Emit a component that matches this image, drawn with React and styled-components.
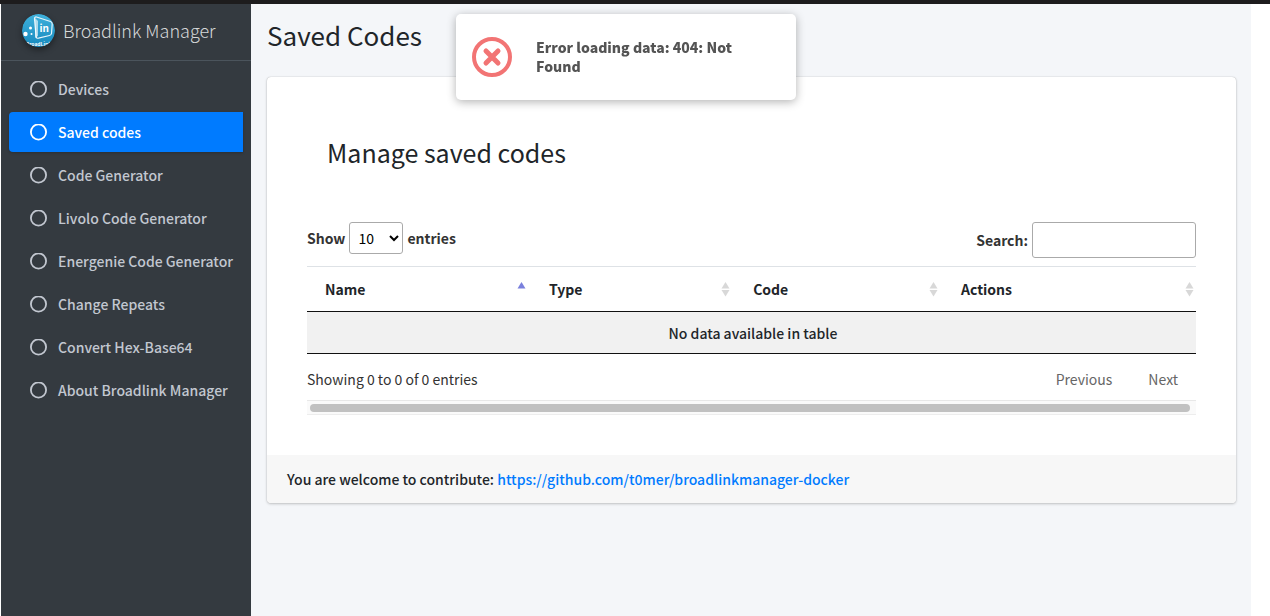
import React, { useState } from "react";
import styled, { createGlobalStyle, css } from "styled-components";

const GlobalStyle = createGlobalStyle`
  *,
  *::before,
  *::after {
    box-sizing: border-box;
  }

  body {
    margin: 0;
    background: #fff;
    color: #212529;
    font-family: "Noto Sans CJK SC", "Noto Sans", sans-serif;
    font-size: 14px;
    font-weight: 500;
    line-height: 24px;
  }

  button,
  input,
  select {
    font: inherit;
  }
`;

const Page = styled.div`
  display: flex;
  flex-direction: column;
  min-height: 100vh;
`;

const TopStrip = styled.div`
  height: 4px;
  background: #1d1c1d;
`;

const Wrapper = styled.div`
  flex: 1;
  display: flex;
  padding: 0 19px 0 1px;
`;

const Sidebar = styled.aside`
  flex: 0 0 250px;
  background: #343a40;
`;

const Brand = styled.a`
  display: flex;
  align-items: center;
  gap: 8px;
  height: 57px;
  padding: 0 0 4px 21px;
  border-bottom: 1px solid #4b545c;
  color: #d6d8d9;
  font-size: 18px;
  font-weight: 300;
  text-decoration: none;

  svg {
    flex: none;
    border-radius: 50%;
    box-shadow: 0 3px 6px rgba(0, 0, 0, 0.4);
  }
`;

const Nav = styled.nav`
  display: flex;
  flex-direction: column;
  gap: 3px;
  padding: 8px;
`;

const NavItem = styled.a`
  display: flex;
  align-items: center;
  gap: 11px;
  height: 40px;
  padding-left: 21px;
  border-radius: 4px 0 0 4px;
  color: #c2c7d0;
  text-decoration: none;
  white-space: nowrap;

  ${(props) =>
    props.$active &&
    css`
      background: #007bff;
      color: #fff;
      box-shadow: 0 1px 3px rgba(0, 0, 0, 0.2);
    `}
`;

const Content = styled.main`
  flex: 1;
  min-width: 0;
  padding: 11px 15px 24px 16px;
  background: #f4f6f9;
`;

const PageTitle = styled.h1`
  margin: 0 0 22px;
  font-size: 26px;
  font-weight: 400;
  line-height: 40px;
`;

const Card = styled.section`
  border-radius: 4px;
  background: #fff;
  box-shadow: 0 0 1px rgba(0, 0, 0, 0.3), 0 1px 3px rgba(0, 0, 0, 0.2);
  overflow: hidden;
`;

const CardBody = styled.div`
  padding: 55px 40px 40px;
`;

const CardTitle = styled.h2`
  margin: 0 20px 50px;
  font-size: 25px;
  font-weight: 400;
  line-height: 40px;
`;

const CardFooter = styled.footer`
  padding: 12px 20px;
  background: #f7f7f7;

  a {
    color: #007bff;
    text-decoration: none;
  }
`;

const Toolbar = styled.div`
  display: flex;
  justify-content: space-between;
  align-items: flex-start;
  padding-bottom: 8px;
`;

const Field = styled.label`
  display: flex;
  align-items: center;
  gap: 4px;
  color: #333;
  font-weight: 700;
`;

const PageSize = styled.select`
  width: 54px;
  height: 32px;
  padding: 0 0 0 4px;
  border: 1px solid #aaa;
  border-radius: 3px;
  background: #fff;
  color: #000;
  font-weight: 400;
`;

const SearchInput = styled.input`
  width: 164px;
  height: 36px;
  padding: 4px;
  border: 1px solid #aaa;
  border-radius: 3px;
  background: #fff;
`;

const TableFrame = styled.div`
  border-top: 1px solid #dee2e6;
  overflow: hidden;
`;

const Table = styled.table`
  width: calc(100% + 3px);
  border-collapse: separate;
  border-spacing: 0;
  border-bottom: 1px solid #111;
  table-layout: fixed;
`;

const HeadCell = styled.th`
  width: ${(props) => props.$width};
  height: 45px;
  padding: 0 5px 0 18px;
  border-bottom: 1px solid #111;
  text-align: left;
`;

const HeadLabel = styled.div`
  display: flex;
  justify-content: space-between;
  align-items: center;
`;

const EmptyCell = styled.td`
  height: 41px;
  padding: 0;
  background: #f1f1f1;
  text-align: center;
`;

const TableFooter = styled.div`
  display: flex;
  justify-content: space-between;
  align-items: center;
  height: 46px;
  padding-top: 4px;
  color: #333;
  font-weight: 400;
`;

const Pager = styled.div`
  display: flex;
`;

const PagerButton = styled.button`
  padding: 0 18px;
  border: none;
  background: none;
  color: #666;
`;

const ScrollTrack = styled.div`
  height: 15px;
  padding: 3px 6px 2px 3px;
  border-top: 1px solid #e8e8e8;
  border-bottom: 1px solid #ededed;
  background: #fafafa;

  &::before {
    content: "";
    display: block;
    height: 8px;
    border-radius: 4px;
    background: #c1c1c1;
  }
`;

const Toast = styled.div`
  position: fixed;
  top: 14px;
  left: calc(50% - 9px);
  transform: translateX(-50%);
  display: flex;
  align-items: center;
  gap: 24px;
  width: 340px;
  min-height: 86px;
  padding: 10px 40px 10px 16px;
  border-radius: 5px;
  background: #fff;
  box-shadow: 0 2px 10px rgba(0, 0, 0, 0.3);
  color: #545454;
  font-weight: 900;
  line-height: 19px;

  svg {
    flex: none;
  }
`;

const LINKS = [
  "Devices",
  "Saved codes",
  "Code Generator",
  "Livolo Code Generator",
  "Energenie Code Generator",
  "Change Repeats",
  "Convert Hex-Base64",
  "About Broadlink Manager",
];

const COLUMNS = [
  { name: "Name", width: "25.1%" },
  { name: "Type", width: "22.9%" },
  { name: "Code", width: "23.3%" },
  { name: "Actions", width: "28.7%" },
];

const Logo = () => (
  <svg width="33" height="33" viewBox="0 0 33 33" aria-hidden="true">
    <defs>
      <linearGradient id="logo" x1="0" y1="0" x2="0" y2="1">
        <stop offset="0" stopColor="#3fb1dc" />
        <stop offset="1" stopColor="#1689bd" />
      </linearGradient>
    </defs>
    <circle cx="16.5" cy="16.5" r="16.5" fill="url(#logo)" />
    <path
      d="M14.500 3 28.500 7.500q1.800.6 1.700 2.500l-.7 9.500q-.3 1.600-2 2l-11 2.700q-2.200.3-2.400-1.800L12.500 5q-.1-2.300 2-2Z"
      fill="none"
      stroke="#e6f5fb"
      strokeWidth="1.200"
    />
    <path d="M13 4v20l3-2V7Z" fill="#fff" fillOpacity="0.6" />
    <circle cx="3.500" cy="20" r="2.200" fill="#fff" />
    <circle cx="8.500" cy="14" r="1.500" fill="#fff" />
    <circle cx="9.500" cy="20" r="1" fill="#fff" />
    <text x="17.500" y="18" fill="#fff" fontSize="10" fontWeight="700">
      in
    </text>
    <text x="16.500" y="31.500" fill="#fff" fontSize="5" fontWeight="700" textAnchor="middle">
      BroadLink
    </text>
  </svg>
);

const CircleIcon = () => (
  <svg width="17" height="17" viewBox="0 0 17 17" aria-hidden="true">
    <circle cx="8.500" cy="8" r="7.600" fill="none" stroke="currentColor" strokeWidth="1.800" overflow="visible" />
  </svg>
);

const SortIcon = ({ sorted }) => (
  <svg width="9" height="16" viewBox="0 0 9 16" aria-hidden="true">
    <path d="M4.500 1 8.500 7.500H.5Z" fill={sorted ? "#7a80dd" : "#d8d8d8"} />
    {!sorted && <path d="M.5 9h8l-4 6.500Z" fill="#d8d8d8" />}
  </svg>
);

const ErrorIcon = () => (
  <svg width="40" height="40" viewBox="0 0 40 40" fill="none" stroke="#f27474" aria-hidden="true">
    <circle cx="20" cy="20" r="18" strokeWidth="4" />
    <path d="m14 14 12 12m0-12L14 26" strokeWidth="5" strokeLinecap="round" />
  </svg>
);

const App = () => {
  const [pageSize, setPageSize] = useState("10");
  const [search, setSearch] = useState("");

  return (
    <Page>
      <GlobalStyle />
      <TopStrip />
      <Wrapper>
        <Sidebar>
          <Brand href="#">
            <Logo />
            <span>Broadlink Manager</span>
          </Brand>
          <Nav>
            {LINKS.map((link) => (
              <NavItem key={link} href="#" $active={link === "Saved codes"}>
                <CircleIcon />
                <span>{link}</span>
              </NavItem>
            ))}
          </Nav>
        </Sidebar>

        <Content>
          <PageTitle>Saved Codes</PageTitle>
          <Card>
            <CardBody>
              <CardTitle>Manage saved codes</CardTitle>
              <Toolbar>
                <Field>
                  Show
                  <PageSize value={pageSize} onChange={(e) => setPageSize(e.target.value)}>
                    <option>10</option>
                    <option>25</option>
                    <option>50</option>
                    <option>100</option>
                  </PageSize>
                  entries
                </Field>
                <Field>
                  Search:
                  <SearchInput type="search" value={search} onChange={(e) => setSearch(e.target.value)} />
                </Field>
              </Toolbar>
              <TableFrame>
                <Table>
                  <thead>
                    <tr>
                      {COLUMNS.map((column, i) => (
                        <HeadCell key={column.name} $width={column.width}>
                          <HeadLabel>
                            {column.name}
                            <SortIcon sorted={i === 0} />
                          </HeadLabel>
                        </HeadCell>
                      ))}
                    </tr>
                  </thead>
                  <tbody>
                    <tr>
                      <EmptyCell colSpan={4}>No data available in table</EmptyCell>
                    </tr>
                  </tbody>
                </Table>
              </TableFrame>
              <TableFooter>
                <span>Showing 0 to 0 of 0 entries</span>
                <Pager>
                  <PagerButton type="button">Previous</PagerButton>
                  <PagerButton type="button">Next</PagerButton>
                </Pager>
              </TableFooter>
              <ScrollTrack />
            </CardBody>
            <CardFooter>
              You are welcome to contribute:{" "}
              <a href="https://github.com/t0mer/broadlinkmanager-docker">
                https://github.com/t0mer/broadlinkmanager-docker
              </a>
            </CardFooter>
          </Card>
        </Content>
      </Wrapper>

      <Toast role="alert">
        <ErrorIcon />
        <span>Error loading data: 404: Not Found</span>
      </Toast>
    </Page>
  );
};

export default App;
